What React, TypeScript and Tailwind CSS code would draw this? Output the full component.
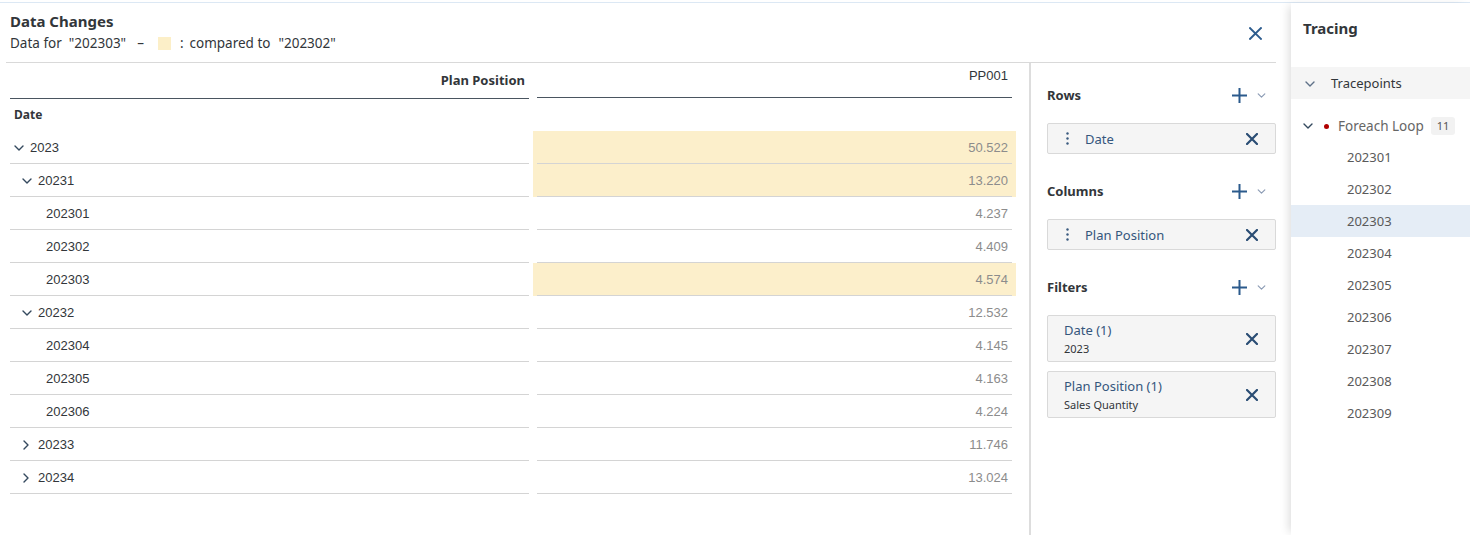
import React from 'react';

type Row = {
  label: string;
  level: 0 | 1 | 2;
  chevron?: 'down' | 'right';
  value: string;
  hl?: boolean;
};

const rows: Row[] = [
  { label: '2023', level: 0, chevron: 'down', value: '50.522', hl: true },
  { label: '20231', level: 1, chevron: 'down', value: '13.220', hl: true },
  { label: '202301', level: 2, value: '4.237' },
  { label: '202302', level: 2, value: '4.409' },
  { label: '202303', level: 2, value: '4.574', hl: true },
  { label: '20232', level: 1, chevron: 'down', value: '12.532' },
  { label: '202304', level: 2, value: '4.145' },
  { label: '202305', level: 2, value: '4.163' },
  { label: '202306', level: 2, value: '4.224' },
  { label: '20233', level: 1, chevron: 'right', value: '11.746' },
  { label: '20234', level: 1, chevron: 'right', value: '13.024' },
];

const tracePoints = ['202301', '202302', '202303', '202304', '202305', '202306', '202307', '202308', '202309'];

const sans = 'font-["Noto_Sans","Liberation_Sans",sans-serif]';
const arial = 'font-["Liberation_Sans",Arial,sans-serif]';

function ChevronDown({ className = '' }: { className?: string }) {
  return (
    <svg width="10" height="6" viewBox="0 0 10 6" className={className} fill="none">
      <path d="M1 1l4 4 4-4" stroke="currentColor" strokeWidth="1.4" strokeLinecap="round" strokeLinejoin="round" />
    </svg>
  );
}

function ChevronRight({ className = '' }: { className?: string }) {
  return (
    <svg width="6" height="10" viewBox="0 0 6 10" className={className} fill="none">
      <path d="M1 1l4 4-4 4" stroke="currentColor" strokeWidth="1.4" strokeLinecap="round" strokeLinejoin="round" />
    </svg>
  );
}

function CloseIcon({ size = 12, stroke = 2 }: { size?: number; stroke?: number }) {
  return (
    <svg width={size} height={size} viewBox="0 0 12 12" fill="none">
      <path d="M1 1l10 10M11 1L1 11" stroke="currentColor" strokeWidth={stroke} strokeLinecap="square" />
    </svg>
  );
}

function PlusIcon() {
  return (
    <svg width="15" height="15" viewBox="0 0 15 15" fill="none">
      <path d="M7.5 0v15M0 7.5h15" stroke="currentColor" strokeWidth="2" />
    </svg>
  );
}

function Dots() {
  return (
    <svg width="3" height="13" viewBox="0 0 3 13" fill="currentColor">
      <circle cx="1.5" cy="1.5" r="1.2" />
      <circle cx="1.5" cy="6.5" r="1.2" />
      <circle cx="1.5" cy="11.5" r="1.2" />
    </svg>
  );
}

function SectionTitle({ title, first }: { title: string; first?: boolean }) {
  return (
    <div className={`h-[32px] flex items-center justify-between ${first ? '' : 'mt-[21px]'}`}>
      <span className="text-[13px] font-bold text-[#32363a] pt-[2px]">{title}</span>
      <div className="flex items-center gap-[10px] pr-[10px] text-[#2b5a8c]">
        <PlusIcon />
        <ChevronDown className="w-[9px] h-[5px] text-[#8b9bb4]" />
      </div>
    </div>
  );
}

function Chip({ label, sub, dots }: { label: string; sub?: string; dots?: boolean }) {
  return (
    <div
      className={`flex items-center border border-[#d9d9d9] bg-[#f5f5f5] rounded-[2px] pr-[17px] ${
        sub ? 'h-[47px] pl-[16px]' : 'h-[31px] pl-[18px]'
      }`}
    >
      {dots && (
        <span className="text-[#3a5a7f] mr-[16px] flex">
          <Dots />
        </span>
      )}
      <div className="flex-1 flex flex-col">
        <span className="text-[13px] leading-[18px] text-[#34567c]">{label}</span>
        {sub && <span className="text-[11px] leading-[16px] text-[#32363a] mt-[2px]">{sub}</span>}
      </div>
      <span className="text-[#2a4d74] flex">
        <CloseIcon size={12} stroke={2.2} />
      </span>
    </div>
  );
}

export default function App() {
  return (
    <div className={`w-[1470px] h-[535px] bg-white overflow-hidden flex flex-col ${sans}`}>
      <div className="h-[2px]" />
      <div className="h-px bg-[#dce8f4]" />
      <div className="flex flex-1 min-h-0">
        {/* Data Changes dialog */}
        <div className="w-[1291px] flex flex-col">
          <div className="h-[59px] flex justify-between pl-[10px] pr-[29px] pt-[8px]">
            <div className="flex flex-col">
              <h1 className="text-[15px] leading-[20px] font-bold text-[#32363a]">Data Changes</h1>
              <div className="flex items-center text-[13.5px] leading-[18px] text-[#32363a] mt-[3px]">
                <span>Data for</span>
                <span className="ml-[7px]">"202303"</span>
                <span className="ml-[11px]">–</span>
                <span className="ml-[14px] w-[13px] h-[13px] bg-[#fcefc8]" />
                <span className="ml-[9px]">:</span>
                <span className="ml-[6px]">compared to</span>
                <span className="ml-[8px]">"202302"</span>
              </div>
            </div>
            <div className="pt-[16px] text-[#2d5c8e]">
              <CloseIcon size={13} stroke={1.8} />
            </div>
          </div>
          <div className="mx-[6px] mr-[15px] h-px bg-[#d9d9d9]" />

          <div className="flex flex-1 min-h-0">
            {/* table */}
            <div className="w-[1029px] pl-[10px]">
              <div className="flex">
                <div className="w-[519px] h-[36px] border-b border-[#4a5560] flex justify-end pt-[7px] pr-[4px]">
                  <span className="text-[13px] leading-[20px] font-bold text-[#32363a]">Plan Position</span>
                </div>
                <div className="w-[483px] ml-[4px] px-[4px]">
                  <div className={`h-[35px] border-b border-[#4a5560] flex justify-end pt-[3px] pr-[4px] ${arial}`}>
                    <span className="text-[13px] leading-[20px] text-[#32363a]">PP001</span>
                  </div>
                </div>
              </div>
              <div className="h-[32px] flex items-center pl-[4px]">
                <span className="text-[12px] font-bold text-[#32363a]">Date</span>
              </div>
              {rows.map((r) => (
                <div key={r.label} className="flex">
                  <div
                    className={`w-[519px] h-[33px] border-b border-[#d4d4d4] flex items-center pt-[2px] text-[13px] text-[#32363a] ${arial} ${
                      r.level === 0 ? 'pl-[4px]' : r.level === 1 ? 'pl-[12px]' : 'pl-[36px]'
                    }`}
                  >
                    {r.chevron && (
                      <span className="w-[10px] mr-[6px] flex text-[#34495e]">
                        {r.chevron === 'down' ? <ChevronDown /> : <ChevronRight className="ml-[1px]" />}
                      </span>
                    )}
                    <span>{r.label}</span>
                  </div>
                  <div className={`w-[483px] ml-[4px] px-[4px] ${r.hl ? 'bg-[#fcefcb]' : ''}`}>
                    <div
                      className={`h-[33px] border-b border-[#d4d4d4] flex items-center justify-end pt-[2px] pr-[4px] text-[13px] text-[#8c8c8c] ${arial}`}
                    >
                      {r.value}
                    </div>
                  </div>
                </div>
              ))}
            </div>

            <div className="w-[2px] bg-[#dddddd]" />

            {/* builder panel */}
            <div className="flex-1 pl-[16px] pr-[15px] pt-[16px]">
              <SectionTitle title="Rows" first />
              <div className="mt-[12px]">
                <Chip label="Date" dots />
              </div>
              <SectionTitle title="Columns" />
              <div className="mt-[12px]">
                <Chip label="Plan Position" dots />
              </div>
              <SectionTitle title="Filters" />
              <div className="mt-[12px] flex flex-col gap-[9px]">
                <Chip label="Date (1)" sub="2023" />
                <Chip label="Plan Position (1)" sub="Sales Quantity" />
              </div>
            </div>
          </div>
        </div>

        {/* Tracing panel */}
        <div className="flex-1 relative bg-white shadow-[-5px_0_9px_-3px_rgba(0,0,0,0.14)]">
          <div className="h-[50px] flex items-center pl-[12px]">
            <span className="text-[15px] font-bold text-[#32363a]">Tracing</span>
          </div>
          <div className="mt-[14px] h-[32px] bg-[#f5f5f5] flex items-center pt-[2px] pl-[14px] text-[13px] text-[#32363a]">
            <ChevronDown className="text-[#5f7188] w-[10px] h-[6px]" />
            <span className="ml-[16px]">Tracepoints</span>
          </div>
          <div className="mt-[10px] h-[32px] flex items-center pt-[2px] pl-[12px] text-[13px]">
            <ChevronDown className="text-[#34495e]" />
            <span className="ml-[11px] w-[5px] h-[5px] rounded-full bg-[#b00000]" />
            <span className="ml-[9px] text-[13.5px] text-[#666666]">Foreach Loop</span>
            <span className="ml-[7px] px-[6px] h-[18px] flex items-center rounded-[3px] bg-[#f2f2f2] text-[11px] text-[#555555]">
              11
            </span>
          </div>
          {tracePoints.map((t) => (
            <div
              key={t}
              className={`h-[32px] flex items-center pt-[2px] pl-[56px] text-[13px] text-[#5a5a5a] ${
                t === '202303' ? 'bg-[#e5edf6]' : ''
              }`}
            >
              {t}
            </div>
          ))}
        </div>
      </div>
    </div>
  );
}
